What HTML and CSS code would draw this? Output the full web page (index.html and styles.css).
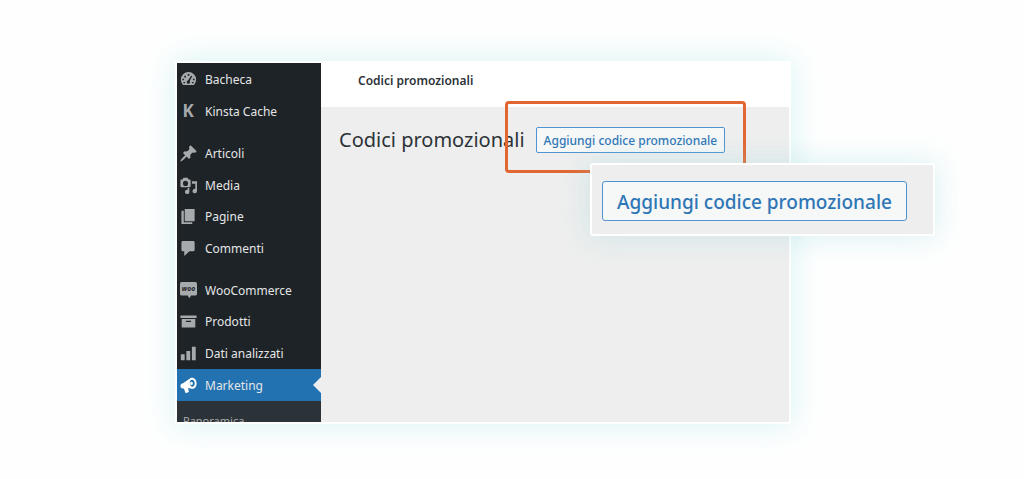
FILE: index.html
```html
<!DOCTYPE html>
<html lang="it">
<head>
<meta charset="utf-8">
<meta name="viewport" content="width=device-width, initial-scale=1">
<title>Codici promozionali</title>
<link rel="stylesheet" href="styles.css">
</head>
<body>
<main class="stage">
  <div class="panel">
    <nav class="sidebar" aria-label="Menu">
      <ul class="menu">
        <li><a href="#"><svg class="icon" viewBox="0 0 20 20"><path fill-rule="evenodd" d="M3.500 16.500A9 9 0 1 1 16.500 16.500ZM9 3.500v2h2v-2ZM5 5.500v2h2v-2ZM13 5.500l-3.300 5.500a2 2 0 1 0 1.800.8L14.500 6ZM2.800 9v2h2V9ZM15.200 9v2h2V9ZM4 13v1.500h2V13ZM14 13v1.500h2V13Z"/></svg>Bacheca</a></li>
        <li><a href="#"><svg class="icon" viewBox="0 0 20 20"><text class="mark-k" x="3" y="17">K</text></svg>Kinsta Cache</a></li>
        <li class="group"><a href="#"><svg class="icon" viewBox="1 1 18 18"><path d="M10.440 3.020l1.820-1.820 6.360 6.350-1.830 1.820c-1.050-.68-2.480-.57-3.410.36l-.75.750c-.92.930-1.040 2.350-.35 3.410l-1.830 1.820-2.410-2.410-2.800 2.790c-.42.420-3.380 2.710-3.800 2.290s1.860-3.390 2.280-3.810l2.790-2.790L4.100 9.360l1.830-1.820c1.050.69 2.480.57 3.400-.36l.75-.75c.93-.92 1.050-2.350.36-3.410z"/></svg>Articoli</a></li>
        <li><a href="#"><svg class="icon" viewBox="0 0 20 20"><path fill-rule="evenodd" d="M1.500 3H3l1-2h5l1 2h1.500c.5 0 1 .5 1 1v7c0 .5-.5 1-1 1h-10c-.5 0-1-.5-1-1V4c0-.5.500-1 1-1ZM6.500 4.500a3 3 0 1 0 0 6 3 3 0 1 0 0-6Z"/><path d="M14 5h6v11.500a2.600 2.600 0 1 1-2-2.500V8h-4ZM11 13v4.500A2.600 2.600 0 1 1 9 15v-2Z"/></svg>Media</a></li>
        <li><a href="#"><svg class="icon" viewBox="1 1 18 18"><path d="M6 15V2h10.500v13ZM5 4v12h9v2H2.500V4Z"/></svg>Pagine</a></li>
        <li><a href="#"><svg class="icon" viewBox="1 1 18 18"><path d="M4 2h11c.8 0 1.500.7 1.500 1.500v8c0 .8-.7 1.500-1.500 1.500h-4l-5.500 5V13H4c-.8 0-1.500-.7-1.500-1.500v-8C2.500 2.700 3.200 2 4 2Z"/></svg>Commenti</a></li>
        <li class="group"><a href="#"><svg class="icon" viewBox="0 0 20 20"><path d="M2 0h16a2 2 0 0 1 2 2v12a2 2 0 0 1-2 2h-5l-2 3-2-3H2a2 2 0 0 1-2-2V2a2 2 0 0 1 2-2Z"/><text class="mark-woo" x="10" y="11">woo</text></svg>WooCommerce</a></li>
        <li><a href="#"><svg class="icon" viewBox="0 0 20 20"><path fill-rule="evenodd" d="M.5 3h19v3H.500ZM2 7h16v10H2ZM7 9v1.500h6V9Z"/></svg>Prodotti</a></li>
        <li><a href="#"><svg class="icon" viewBox="0 0 20 20"><path d="M1 11h4.500v7H1ZM7.500 7H12v11H7.500ZM14 2h4.500v16H14Z"/></svg>Dati analizzati</a></li>
        <li class="current"><a href="#" aria-current="page"><svg class="icon" viewBox="0 0 20 20"><path fill-rule="evenodd" d="M13 1c3.800-.7 6.500 2.300 6.500 6.500s-2.800 7-6 6.200L9.500 13l1 4.500-3.800 1.500-2.200-5.500C2 14 .5 12.500.5 10.500S2 7.500 4 7ZM14 3.300c-1.800.2-2.600 2-2.400 4.400.2 2.500 1.600 4 3.200 3.800 1.700-.2 2.700-2 2.500-4.300-.2-2.400-1.500-4.100-3.300-3.900Z"/><ellipse cx="13.500" cy="7.500" rx="1.600" ry="2"/></svg>Marketing</a></li>
      </ul>
      <div class="submenu"><a href="#">Panoramica</a></div>
    </nav>
    <section class="content">
      <header class="topbar">Codici promozionali</header>
      <div class="heading">
        <h1>Codici promozionali</h1>
        <button class="add" type="button">Aggiungi codice promozionale</button>
      </div>
    </section>
    <div class="highlight"></div>
    <div class="callout"><button class="add large" type="button">Aggiungi codice promozionale</button></div>
  </div>
</main>
</body>
</html>
```
FILE: styles.css
```css
* { box-sizing: border-box; }

body {
  margin: 0;
  background: #fefefe;
  font-family: "Noto Sans", "Open Sans", sans-serif;
  font-size: 12px;
  color: #2c3338;
}

.stage { padding: 61px 88px 55px 175px; }

.panel {
  position: relative;
  display: flex;
  width: 81%;
  aspect-ratio: 616 / 363;
  border: 2px solid #fff;
  border-radius: 2px;
  background: #eee;
  box-shadow: 0 0 30px 3px #def5f6;
}

.sidebar {
  display: flex;
  flex-direction: column;
  flex: 0 0 144px;
  background: #1d2327;
}

.menu {
  display: flex;
  flex: 1;
  flex-direction: column;
  margin: 0;
  padding: 1px 0 0;
  list-style: none;
}

.menu li { flex: 1; }
.menu .group { margin-top: 10px; }

.menu a {
  display: flex;
  align-items: center;
  gap: 8px;
  height: 100%;
  padding-left: 3px;
  color: #e4e5e6;
  text-decoration: none;
}

.icon {
  flex: none;
  width: 17px;
  height: 17px;
  overflow: visible;
  fill: #a7aaad;
}

.mark-k { font: 700 20px "Noto Sans", sans-serif; }

.mark-woo {
  font: italic 700 8px "Noto Sans", sans-serif;
  fill: #1d2327;
  text-anchor: middle;
}

.menu .current {
  position: relative;
  background: #2271b1;
}

.current .icon { fill: #fff; }

.current::after {
  content: "";
  position: absolute;
  top: 50%;
  right: 0;
  border: 8px solid transparent;
  border-right-color: #eee;
  border-left: 0;
  transform: translateY(-50%);
}

.submenu {
  height: 21px;
  padding: 11px 6px 0;
  overflow: hidden;
  background: #2c3338;
  font-size: 11px;
  line-height: 18px;
}

.submenu a { color: #a9adb0; text-decoration: none; }

.content { flex: 1; min-width: 0; }

.topbar {
  height: 44px;
  padding-left: 37px;
  background: #fff;
  font-weight: 600;
  line-height: 36px;
}

.heading {
  display: flex;
  align-items: center;
  gap: 11px;
  padding: 18px 0 0 18px;
  white-space: nowrap;
}

.heading h1 {
  margin: 0;
  font-size: 20px;
  font-weight: 400;
  line-height: 30px;
}

.add {
  height: 26px;
  padding: 0 7px;
  border: 1px solid #4f94d0;
  border-radius: 2px;
  background: #f6f7f7;
  color: #2e76b6;
  font: 500 12px "Noto Sans", "Open Sans", sans-serif;
  white-space: nowrap;
}

.highlight {
  position: absolute;
  top: 38px;
  left: 328px;
  width: 241px;
  height: 72px;
  border: 3px solid #e26632;
  border-radius: 4px;
}

.callout {
  position: absolute;
  top: 100px;
  left: 413px;
  padding: 16px 26px 13px 10px;
  border: 2px solid #fff;
  border-radius: 3px;
  background: #eee;
  box-shadow: 0 0 28px 2px rgba(150, 215, 220, 0.32);
}

.add.large {
  display: block;
  height: 40px;
  padding: 2px 14px 0;
  border-radius: 3px;
  font-size: 19px;
  font-weight: 500;
}
```
